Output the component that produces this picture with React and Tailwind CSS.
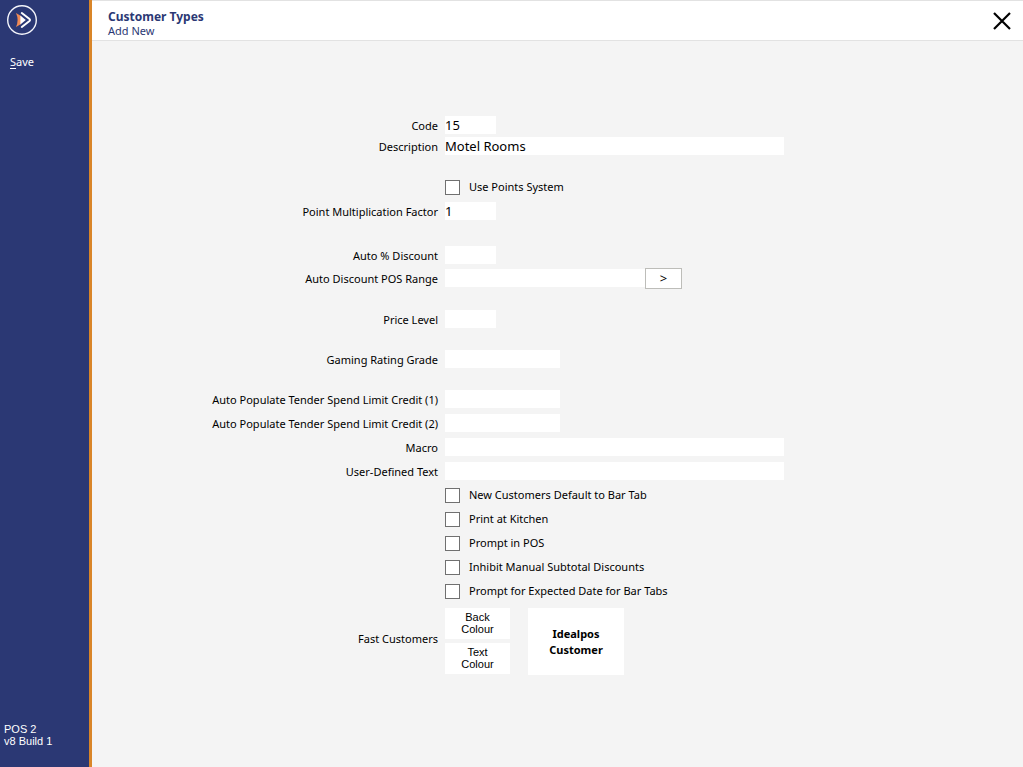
import React from "react";

const LABEL = "w-[346px] shrink-0 whitespace-nowrap pt-0.5 text-right text-[11px] leading-[18px]";
const INPUT =
  "h-[18px] rounded-none border-0 bg-white p-0 text-[13px] leading-[18px] text-black outline-none";

function Field({ id, label, width, value = "", children }) {
  return (
    <div className="flex h-[18px] items-center">
      <label htmlFor={id} className={LABEL}>
        {label}
      </label>
      <input id={id} type="text" defaultValue={value} className={`${INPUT} ${width} ml-[7px]`} />
      {children}
    </div>
  );
}

function Check({ label }) {
  return (
    <label className="ml-[353px] flex h-[15px] items-center gap-[9px] self-start whitespace-nowrap text-[11px] leading-[15px]">
      <input
        type="checkbox"
        className="size-[15px] shrink-0 appearance-none border border-[#707070] bg-white checked:bg-[#2b3874]"
      />
      <span className="pb-0.5">{label}</span>
    </label>
  );
}

function Logo() {
  return (
    <svg viewBox="0 0 32 32" className="size-8" aria-hidden="true">
      <circle cx="16" cy="16" r="14.3" fill="none" stroke="#f4f5fb" strokeWidth="1.4" />
      <path d="M10 9 L15 12 L15 20 L10 23 Q13.2 16 10 9 Z" fill="#f08a55" />
      <path d="M14.4 11.6 L19.8 16 L14.4 20.4 Z" fill="#fff" />
      <path
        d="M15.8 9 L23.2 14.7 Q24.8 16 23.2 17.3 L15.8 23"
        fill="none"
        stroke="#fff"
        strokeWidth="2"
        strokeLinecap="round"
      />
    </svg>
  );
}

export default function App() {
  return (
    <div className="flex min-h-screen bg-[#f4f4f4] font-['Noto_Sans','Open_Sans',sans-serif] text-black">
      <aside className="flex w-[92px] shrink-0 flex-col border-r-[3px] border-[#d98528] bg-[#2b3874] text-white">
        <div className="pt-1 pl-1.5">
          <Logo />
        </div>
        <button type="button" className="mt-[18px] ml-2.5 self-start text-[11px] leading-4">
          <span className="underline underline-offset-2">S</span>ave
        </button>
        <p className="mt-auto pb-5 pl-1 font-['Liberation_Sans',sans-serif] text-[11px] leading-3">
          POS 2<br />
          v8 Build 1
        </p>
      </aside>

      <div className="min-w-0 flex-1">
        <header className="flex h-[41px] items-center justify-between border-y border-[#e2e2e2] bg-white pr-3 pl-4 text-[#2b3874]">
          <div className="pt-1.5">
            <h1 className="text-xs leading-[14px] font-bold">Customer Types</h1>
            <p className="text-[11px] leading-[14px]">Add New</p>
          </div>
          <button type="button" aria-label="Close" className="text-black">
            <svg viewBox="0 0 18 18" className="size-[18px]" aria-hidden="true">
              <path d="M1 1 L17 17 M17 1 L1 17" stroke="currentColor" strokeWidth="2.2" fill="none" />
            </svg>
          </button>
        </header>

        <form className="flex flex-col pt-[75px]" onSubmit={(e) => e.preventDefault()}>
          <div className="flex flex-col gap-[3px]">
            <Field id="code" label="Code" width="w-[51px]" value="15" />
            <Field id="description" label="Description" width="w-[339px]" value="Motel Rooms" />
          </div>

          <div className="mt-[25px] flex flex-col gap-[7px]">
            <Check label="Use Points System" />
            <Field id="factor" label="Point Multiplication Factor" width="w-[51px]" value="1" />
          </div>

          <div className="mt-[26px] flex flex-col gap-[5px]">
            <Field id="discount" label="Auto % Discount" width="w-[51px]" />
            <Field id="range" label="Auto Discount POS Range" width="w-[200px]">
              <button
                type="button"
                aria-label="Choose range"
                className="h-[21px] w-[37px] shrink-0 border border-[#bdbdb9] bg-white text-[13px] leading-4"
              >
                &gt;
              </button>
            </Field>
          </div>

          <div className="mt-[23px] flex flex-col gap-[22px]">
            <Field id="price" label="Price Level" width="w-[51px]" />
            <Field id="grade" label="Gaming Rating Grade" width="w-[115px]" />
          </div>

          <div className="mt-[22px] flex flex-col gap-1.5">
            <Field id="credit1" label="Auto Populate Tender Spend Limit Credit (1)" width="w-[115px]" />
            <Field id="credit2" label="Auto Populate Tender Spend Limit Credit (2)" width="w-[115px]" />
            <Field id="macro" label="Macro" width="w-[339px]" />
            <Field id="userText" label="User-Defined Text" width="w-[339px]" />
          </div>

          <div className="mt-2 flex flex-col gap-[9px]">
            <Check label="New Customers Default to Bar Tab" />
            <Check label="Print at Kitchen" />
            <Check label="Prompt in POS" />
            <Check label="Inhibit Manual Subtotal Discounts" />
            <Check label="Prompt for Expected Date for Bar Tabs" />
          </div>

          <div className="mt-[9px] flex items-start">
            <div className="pt-5">
              <div className={LABEL}>Fast Customers</div>
            </div>
            <div className="ml-[7px] flex flex-col gap-1 font-['Liberation_Sans',sans-serif] text-[11px] leading-3">
              <button type="button" className="flex h-[31px] w-[65px] flex-col items-center bg-white pt-[3px]">
                <span>Back</span>
                <span>Colour</span>
              </button>
              <button type="button" className="flex h-[31px] w-[65px] flex-col items-center bg-white pt-[3px]">
                <span>Text</span>
                <span>Colour</span>
              </button>
            </div>
            <div className="ml-[18px] flex h-[67px] w-24 items-center justify-center bg-white text-center text-[11px] leading-4 font-bold">
              Idealpos
              <br />
              Customer
            </div>
          </div>
        </form>
      </div>
    </div>
  );
}
